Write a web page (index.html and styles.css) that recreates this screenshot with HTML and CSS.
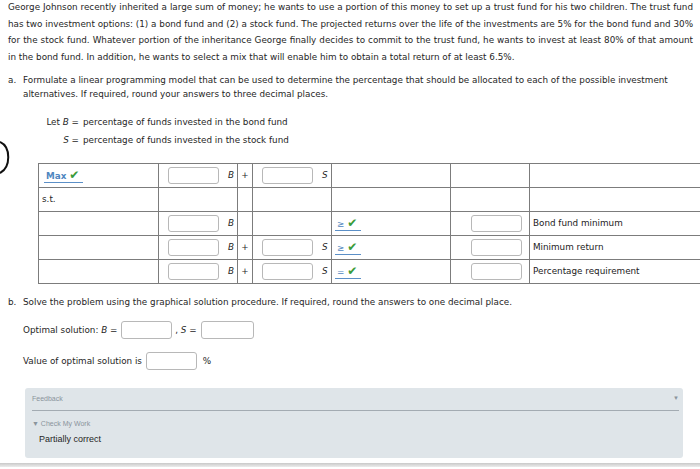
FILE: index.html
```html
<!DOCTYPE html>
<html>
<head>
<meta charset="utf-8">
<link rel="stylesheet" href="styles.css">
</head>
<body>
<svg class="paren" width="12" height="36" viewBox="0 0 12 36"><path d="M0 2 C 11 7, 11 27, 0 33" fill="none" stroke="#111" stroke-width="2"/></svg>
<div class="page">
  <p class="intro">George Johnson recently inherited a large sum of money; he wants to use a portion of this money to set up a trust fund for his two children. The trust fund has two investment options: (1) a bond fund and (2) a stock fund. The projected returns over the life of the investments are 5% for the bond fund and 30% for the stock fund. Whatever portion of the inheritance George finally decides to commit to the trust fund, he wants to invest at least 80% of that amount in the bond fund. In addition, he wants to select a mix that will enable him to obtain a total return of at least 6.5%.</p>

  <div class="part parta">
    <span class="marker">a.</span>
    <span class="ptext">Formulate a linear programming model that can be used to determine the percentage that should be allocated to each of the possible investment alternatives. If required, round your answers to three decimal places.</span>
  </div>

  <div class="defs">
    <span class="dl">Let <i>B</i> =</span><span class="dd">percentage of funds invested in the bond fund</span>
    <span class="dl"><i>S</i> =</span><span class="dd">percentage of funds invested in the stock fund</span>
  </div>

  <table class="lp">
    <colgroup>
      <col class="c1"><col class="c2"><col class="c3"><col class="c4"><col class="c5"><col class="c6"><col class="c7">
    </colgroup>
    <tr>
      <td class="sel"><span class="uline"><b class="blue">Max</b> <span class="chk">✔</span></span></td>
      <td class="var"><span class="box"></span><i>B</i></td>
      <td class="op">+</td>
      <td class="var"><span class="box"></span><i>S</i></td>
      <td></td><td></td><td></td>
    </tr>
    <tr>
      <td class="st">s.t.</td>
      <td></td><td></td><td></td><td></td><td></td><td></td>
    </tr>
    <tr>
      <td></td>
      <td class="var"><span class="box"></span><i>B</i></td>
      <td></td><td></td>
      <td class="rel"><span class="uline"><span class="blue">≥</span> <span class="chk">✔</span></span></td>
      <td class="rhs"><span class="box"></span></td>
      <td class="lbl">Bond fund minimum</td>
    </tr>
    <tr>
      <td></td>
      <td class="var"><span class="box"></span><i>B</i></td>
      <td class="op">+</td>
      <td class="var"><span class="box"></span><i>S</i></td>
      <td class="rel"><span class="uline"><span class="blue">≥</span> <span class="chk">✔</span></span></td>
      <td class="rhs"><span class="box"></span></td>
      <td class="lbl">Minimum return</td>
    </tr>
    <tr>
      <td></td>
      <td class="var"><span class="box"></span><i>B</i></td>
      <td class="op">+</td>
      <td class="var"><span class="box"></span><i>S</i></td>
      <td class="rel"><span class="uline"><span class="blue">=</span> <span class="chk">✔</span></span></td>
      <td class="rhs"><span class="box"></span></td>
      <td class="lbl">Percentage requirement</td>
    </tr>
  </table>

  <div class="part partb">
    <span class="marker">b.</span>
    <span class="ptext">Solve the problem using the graphical solution procedure. If required, round the answers to one decimal place.</span>
  </div>

  <div class="answer">Optimal solution: <i>B</i> = <span class="box"></span><span class="sep">, <i>S</i> = </span><span class="box box2"></span></div>
  <div class="answer val">Value of optimal solution is <span class="box"></span><span class="pct">%</span></div>

  <div class="feedback">
    <div class="fb-head"><span>Feedback</span><span class="tri">▼</span></div>
    <div class="fb-check">▼ Check My Work</div>
    <div class="fb-result">Partially correct</div>
  </div>
</div>
<div class="bottombar"></div>
</body>
</html>
```
FILE: styles.css
```css
html, body {
  margin: 0;
  padding: 0;
  background: #fff;
  overflow: hidden;
}
body {
  font-family: "DejaVu Sans", Verdana, sans-serif;
  color: #262626;
  font-size: 8.8px;
  width: 700px;
  height: 469px;
  position: relative;
}
.paren {
  position: absolute;
  left: 0;
  top: 140px;
}
.page {
  padding: 0 7px 0 8px;
}
.intro {
  margin: -1px 0 0 0;
  line-height: 16.7px;
  text-align: justify;
}
.part {
  display: flex;
  line-height: 14px;
}
.parta {
  margin-top: 7px;
}
.marker {
  width: 15px;
  flex: none;
}
.ptext {
  flex: 1;
  padding-right: 16px;
}
.defs {
  display: grid;
  grid-template-columns: 71px auto;
  column-gap: 4px;
  margin-top: 12px;
  line-height: 18px;
}
.dl {
  text-align: right;
}
.lp {
  margin-top: 14px;
  margin-left: 30px;
  border-collapse: collapse;
  table-layout: fixed;
  width: 700px;
}
.lp td {
  border: 1px solid #7c7c7c;
  height: 23px;
  padding: 0;
  vertical-align: middle;
  white-space: nowrap;
}
.c1 { width: 120px; }
.c2 { width: 79px; }
.c3 { width: 15px; }
.c4 { width: 79px; }
.c5 { width: 119px; }
.c6 { width: 79px; }
.c7 { width: 209px; }
.box {
  display: inline-block;
  width: 51px;
  height: 17px;
  border: 1px solid #b8b8b8;
  border-radius: 3px;
  background: #fff;
  vertical-align: middle;
  box-sizing: border-box;
}
.var {
  padding: 0 4px 0 9px !important;
}
.var .box {
  margin-right: 9px;
}
.op {
  text-align: center;
}
.sel {
  padding-left: 5px !important;
}
.st {
  padding-left: 3px !important;
}
.uline {
  display: inline-block;
  border-bottom: 1.5px solid #5b8fc7;
  padding: 0 4px 1px 2px;
  margin-top: 2px;
}
.blue {
  color: #4f86c0;
}
.chk {
  color: #3a9b3a;
  font-size: 12px;
  line-height: 12px;
}
.rel {
  padding-left: 3px !important;
}
.rhs {
  text-align: center;
}
.rhs .box {
  margin-left: 12px;
}
.lbl {
  padding-left: 3px !important;
  color: #222;
}
.partb {
  margin-top: 11px;
}
.answer {
  margin-left: 15px;
  margin-top: 12px;
  line-height: 19px;
}
.answer .box {
  height: 18px;
  margin-left: 1px;
}
.sep {
  margin: 0 1px 0 3px;
}
.box2 {
  width: 53px !important;
}
.val {
  margin-top: 12px;
}
.pct {
  margin-left: 6px;
}
.feedback {
  margin: 17px 10px 0 17px;
  height: 70px;
  background: #dfe5e9;
  border-radius: 3px;
  padding: 0 4px 0 7px;
  font-family: "Liberation Sans", Arial, sans-serif;
}
.fb-head {
  display: flex;
  justify-content: space-between;
  font-size: 7px;
  color: #8a949c;
  padding-top: 7px;
  height: 23px;
  box-sizing: border-box;
  border-bottom: 1px solid #a3abb2;
}
.tri {
  font-size: 6px;
  margin-top: 0;
  margin-right: 0;
}
.fb-check {
  font-size: 7px;
  color: #8a949c;
  margin-top: 9px;
}
.fb-result {
  font-size: 9px;
  color: #1f1f1f;
  margin: 7px 0 0 7px;
}
.bottombar {
  position: absolute;
  left: 0;
  right: 0;
  top: 463px;
  height: 4px;
  background: linear-gradient(#c9c9c9, #ececec);
}
```
